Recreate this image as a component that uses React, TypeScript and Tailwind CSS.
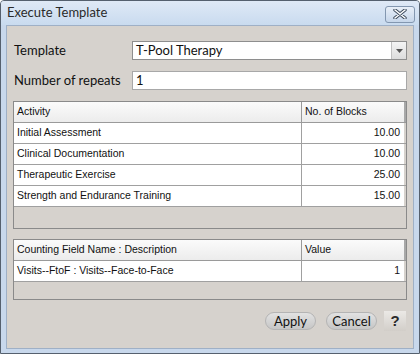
import React from 'react';

const activities = [
  { name: 'Initial Assessment', blocks: '10.00' },
  { name: 'Clinical Documentation', blocks: '10.00' },
  { name: 'Therapeutic Exercise', blocks: '25.00' },
  { name: 'Strength and Endurance Training', blocks: '15.00' },
];

const counts = [{ name: 'Visits--FtoF : Visits--Face-to-Face', value: '1' }];

const CloseIcon = () => (
  <svg width="14" height="10" viewBox="0 0 14 10">
    <path d="M2 1 L12 9 M12 1 L2 9" stroke="#3c4a5c" strokeWidth="3.4" strokeLinecap="round" />
    <path d="M2 1 L12 9 M12 1 L2 9" stroke="#ffffff" strokeWidth="1.6" strokeLinecap="round" />
  </svg>
);

interface GridProps {
  cols: [string, string];
  rows: { a: string; b: string }[];
  filler: number;
}

const Grid: React.FC<GridProps> = ({ cols, rows, filler }) => (
  <div className="border border-[#8a8a8a] bg-[#d6d2cd] text-[10.5px] text-[#111]" style={{ fontFamily: '"Liberation Sans", Arial, sans-serif' }}>
    <div className="flex h-[21px] bg-gradient-to-b from-[#fbfbfb] to-[#ececec] border-b border-[#9a9a9a]">
      <div className="w-[288px] pl-[3px] flex items-center border-r border-[#9a9a9a]">{cols[0]}</div>
      <div className="flex-1 pl-[3px] flex items-center border-r-2 border-[#a8a8a8]">{cols[1]}</div>
    </div>
    {rows.map((r) => (
      <div key={r.a} className="flex h-[21px] bg-white border-b border-[#a0a0a0]">
        <div className="w-[288px] pl-[3px] flex items-center border-r border-[#a0a0a0]">{r.a}</div>
        <div className="flex-1 pr-[4px] flex items-center justify-end border-r-2 border-[#d6d2cd]">{r.b}</div>
      </div>
    ))}
    <div style={{ height: filler }} />
  </div>
);

const PillButton: React.FC<{ label: string }> = ({ label }) => (
  <button className="w-[51px] h-[18px] rounded-full border border-[#b4b4b4] bg-gradient-to-b from-[#e2e2e2] to-[#c6c6c6] text-[13px] leading-none text-[#111] flex items-center justify-center">
    {label}
  </button>
);

export default function App() {
  return (
    <div
      className="w-[420px] h-[354px] border border-[#55606e] rounded-t-[4px] bg-[#c8d8ec] flex flex-col overflow-hidden"
      style={{ fontFamily: 'Lato, "Noto Sans", sans-serif' }}
    >
      <div className="h-[24px] flex items-center justify-between pl-[6px] pr-[4px] bg-gradient-to-b from-[#dfe9f6] to-[#c9dbef]">
        <span className="text-[13px] text-[#2a2a2a]">Execute Template</span>
        <button className="w-[30px] h-[17px] mt-[2px] rounded-[3px] border border-[#8397b0] bg-gradient-to-b from-[#e8eff8] to-[#c6d6ea] flex items-center justify-center">
          <CloseIcon />
        </button>
      </div>

      <div className="flex-1 mx-[5px] mb-[4px] border border-[#9fb0c6] bg-[#d6d2cd] px-[6px] pt-[15px] flex flex-col">
        <div className="flex items-center h-[19px] text-[13px] text-[#111]">
          <span className="w-[119px] pl-[1px]">Template</span>
          <div className="flex-1 h-[19px] bg-white border border-[#8e8e8e] flex items-center justify-between">
            <span className="pl-[3px]">T-Pool Therapy</span>
            <span className="w-[15px] h-[17px] bg-gradient-to-b from-[#f4f4f4] to-[#dcdcdc] border-l border-[#c0c0c0] flex items-center justify-center">
              <svg width="7" height="4" viewBox="0 0 7 4">
                <path d="M0 0 H7 L3.5 4 Z" fill="#555" />
              </svg>
            </span>
          </div>
        </div>

        <div className="flex items-center h-[19px] mt-[11px] text-[13px] text-[#111]">
          <span className="w-[119px] pl-[1px]">Number of repeats</span>
          <div className="flex-1 h-[19px] bg-white border border-[#a8a8a8] flex items-center">
            <span className="pl-[3px]">1</span>
          </div>
        </div>

        <div className="mt-[11px]">
          <Grid
            cols={['Activity', 'No. of Blocks']}
            rows={activities.map((a) => ({ a: a.name, b: a.blocks }))}
            filler={21}
          />
        </div>

        <div className="mt-[10px]">
          <Grid
            cols={['Counting Field Name : Description', 'Value']}
            rows={counts.map((c) => ({ a: c.name, b: c.value }))}
            filler={17}
          />
        </div>

        <div className="flex items-center justify-end mt-[11px] pr-[1px]">
          <PillButton label="Apply" />
          <div className="w-[10px]" />
          <PillButton label="Cancel" />
          <div className="w-[7px]" />
          <div className="w-[22px] h-[20px] bg-gradient-to-b from-[#ebe9e6] to-[#d2cec9] flex items-center justify-center text-[15px] font-black text-[#2a2a2a]" style={{ fontFamily: '"Liberation Sans", Arial, sans-serif' }}>
            ?
          </div>
        </div>
      </div>
    </div>
  );
}
